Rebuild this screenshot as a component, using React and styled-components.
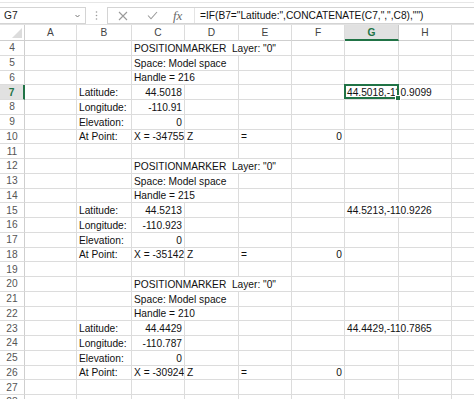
import React from 'react';
import styled, { createGlobalStyle } from 'styled-components';

const GREEN = '#217346';
const GRID = '#dcdcdc';
const HEAD_LINE = '#cfcfcf';
const FONT = '"Liberation Sans", Arial, sans-serif';
const FS = '10.2px';

const GlobalStyle = createGlobalStyle`
  html, body { margin: 0; padding: 0; background: #fff; }
  body { font-family: ${FONT}; }
`;

const Window = styled.div`
  width: 474px;
  height: 399px;
  overflow: hidden;
  background: #fff;
  display: flex;
  flex-direction: column;
`;

const FormulaBar = styled.div`
  margin-top: 2px;
  height: 24px;
  box-sizing: border-box;
  border-top: 1px solid #e6e6e6;
  padding-top: 4px;
  display: flex;
  align-items: flex-start;
`;

const NameBox = styled.div`
  width: 86px;
  height: 17px;
  box-sizing: border-box;
  border: 1px solid #d4d4d4;
  border-left: none;
  display: flex;
  align-items: center;
  justify-content: space-between;
  padding: 0 5px 0 4px;
  font-size: ${FS};
  color: #222;
`;

const Splitter = styled.div`
  width: 21px;
  height: 17px;
  display: flex;
  align-items: center;
  justify-content: center;
`;

const InputBox = styled.div`
  flex: 1;
  height: 17px;
  box-sizing: border-box;
  border: 1px solid #d4d4d4;
  border-right: none;
  display: flex;
  align-items: center;
`;

const Actions = styled.div`
  width: 87px;
  height: 100%;
  box-sizing: border-box;
  display: flex;
  align-items: center;
  padding-left: 10px;
  border-right: 1px solid #e4e4e4;
`;

const ActionSlot = styled.div`
  margin-left: ${(p) => p.$gap || 0}px;
  display: flex;
  align-items: center;
  justify-content: center;
`;

const Fx = styled.span`
  font-family: "Liberation Serif", "DejaVu Serif", serif;
  font-style: italic;
  font-size: 13px;
  color: #6a6a6a;
  line-height: 1;
`;

const FormulaText = styled.div`
  padding-left: 5px;
  font-size: ${FS};
  color: #111;
  white-space: pre;
`;

const Sheet = styled.div`
  display: grid;
  grid-template-columns: 25px 52px 55px 53px 54px 53px 53px 54px 53px 40px;
  grid-template-rows: 16px;
  grid-auto-rows: 14.75px;
  font-size: ${FS};
  border-top: 1px solid #e2e2e2;
`;

const Corner = styled.div`
  position: relative;
  box-sizing: border-box;
  border-right: 1px solid ${HEAD_LINE};
  border-bottom: 1px solid ${HEAD_LINE};
  &::after {
    content: '';
    position: absolute;
    right: 2px;
    bottom: 2px;
    width: 0;
    height: 0;
    border-left: 10px solid transparent;
    border-bottom: 10px solid #dcdcdc;
  }
`;

const ColHeader = styled.div`
  box-sizing: border-box;
  border-right: 1px solid ${(p) => (p.$active ? '#c8c8c8' : GRID)};
  border-bottom: ${(p) => (p.$active ? `2px solid ${GREEN}` : `1px solid ${HEAD_LINE}`)};
  background: ${(p) => (p.$active ? '#e1e1e1' : '#fff')};
  color: ${(p) => (p.$active ? GREEN : '#444')};
  font-weight: ${(p) => (p.$active ? 700 : 400)};
  display: flex;
  align-items: center;
  justify-content: center;
`;

const RowHeader = styled.div`
  box-sizing: border-box;
  border-right: ${(p) => (p.$active ? `2px solid ${GREEN}` : `1px solid ${HEAD_LINE}`)};
  border-bottom: 1px solid ${GRID};
  background: ${(p) => (p.$active ? '#e1e1e1' : '#fff')};
  color: ${(p) => (p.$active ? GREEN : '#555')};
  font-weight: ${(p) => (p.$active ? 700 : 400)};
  display: flex;
  align-items: center;
  justify-content: center;
`;

const Cell = styled.div`
  position: relative;
  grid-column: span ${(p) => p.$span || 1};
  box-sizing: border-box;
  border-right: 1px solid ${GRID};
  border-bottom: 1px solid ${GRID};
  padding: 0 2px 0 2px;
  display: flex;
  align-items: flex-end;
  justify-content: ${(p) => (p.$align === 'right' ? 'flex-end' : 'flex-start')};
  white-space: pre;
  overflow: ${(p) => (p.$clip ? 'hidden' : 'visible')};
  color: #111;
  line-height: 13px;
`;

const Selection = styled.div`
  position: absolute;
  left: -1px;
  top: -1px;
  width: 55px;
  height: calc(100% + 1px);
  box-sizing: border-box;
  border: 2px solid ${GREEN};
  pointer-events: none;
  &::after {
    content: '';
    position: absolute;
    right: -4px;
    bottom: -4px;
    width: 4px;
    height: 4px;
    background: ${GREEN};
    border: 1px solid #fff;
  }
`;

const COLS = ['A', 'B', 'C', 'D', 'E', 'F', 'G', 'H', ''];
const ACTIVE_COL = 6;
const ACTIVE_ROW = 7;

const blocks = [
  { start: 4, handle: 216, lat: '44.5018', lon: '-110.91', x: 'X = -3475529.6', g: '44.5018,-110.9099' },
  { start: 12, handle: 215, lat: '44.5213', lon: '-110.923', x: 'X = -3514287.1', g: '44.5213,-110.9226' },
  { start: 20, handle: 210, lat: '44.4429', lon: '-110.787', x: 'X = -3092451.9', g: '44.4429,-110.7865' },
];

const rowData = {};
blocks.forEach((b) => {
  const s = b.start;
  rowData[s] = { 2: { text: 'POSITIONMARKER  Layer: "0"', span: 3 } };
  rowData[s + 1] = { 2: { text: 'Space: Model space', span: 2 } };
  rowData[s + 2] = { 2: { text: `Handle = ${b.handle}`, span: 2 } };
  rowData[s + 3] = {
    1: { text: 'Latitude:' },
    2: { text: b.lat, align: 'right' },
    6: { text: b.g, span: 2 },
  };
  rowData[s + 4] = { 1: { text: 'Longitude:' }, 2: { text: b.lon, align: 'right' } };
  rowData[s + 5] = { 1: { text: 'Elevation:' }, 2: { text: '0', align: 'right' } };
  rowData[s + 6] = {
    1: { text: 'At Point:' },
    2: { text: b.x, clip: true },
    3: { text: 'Z' },
    4: { text: '=' },
    5: { text: '0', align: 'right' },
  };
});

const ROWS = Array.from({ length: 25 }, (_, i) => i + 4);

function XIcon() {
  return (
    <svg width="10" height="10" viewBox="0 0 10 10">
      <path d="M1 1 L9 9 M9 1 L1 9" stroke="#9a9a9a" strokeWidth="1.1" fill="none" />
    </svg>
  );
}

function CheckIcon() {
  return (
    <svg width="11" height="9" viewBox="0 0 11 9">
      <path d="M1 4.5 L4 7.8 L10 1" stroke="#9a9a9a" strokeWidth="1.1" fill="none" />
    </svg>
  );
}

function Caret() {
  return (
    <svg width="5" height="4" viewBox="0 0 5 4">
      <path d="M0.5 1 L2.5 3 L4.5 1" stroke="#777" strokeWidth="1" fill="none" />
    </svg>
  );
}

function Dots() {
  return (
    <svg width="3" height="9" viewBox="0 0 3 9">
      <circle cx="1.5" cy="1" r="0.8" fill="#9a9a9a" />
      <circle cx="1.5" cy="4.5" r="0.8" fill="#9a9a9a" />
      <circle cx="1.5" cy="8" r="0.8" fill="#9a9a9a" />
    </svg>
  );
}

function SheetRow({ row }) {
  const data = rowData[row] || {};
  const cells = [];
  let c = 0;
  while (c < COLS.length) {
    const d = data[c];
    const span = d && d.span ? d.span : 1;
    const isSel = row === ACTIVE_ROW && c === ACTIVE_COL;
    cells.push(
      <Cell key={c} $span={span} $align={d && d.align} $clip={d && d.clip}>
        {d ? d.text : null}
        {isSel && <Selection />}
      </Cell>
    );
    c += span;
  }
  return (
    <>
      <RowHeader $active={row === ACTIVE_ROW}>{row}</RowHeader>
      {cells}
    </>
  );
}

export default function App() {
  return (
    <Window>
      <GlobalStyle />
      <FormulaBar>
        <NameBox>
          <span>G7</span>
          <Caret />
        </NameBox>
        <Splitter>
          <Dots />
        </Splitter>
        <InputBox>
          <Actions>
            <ActionSlot>
              <XIcon />
            </ActionSlot>
            <ActionSlot $gap={19}>
              <CheckIcon />
            </ActionSlot>
            <ActionSlot $gap={15}>
              <Fx>fx</Fx>
            </ActionSlot>
          </Actions>
          <FormulaText>=IF(B7="Latitude:",CONCATENATE(C7,",",C8),"")</FormulaText>
        </InputBox>
      </FormulaBar>
      <Sheet>
        <Corner />
        {COLS.map((l, i) => (
          <ColHeader key={i} $active={i === ACTIVE_COL}>
            {l}
          </ColHeader>
        ))}
        {ROWS.map((r) => (
          <SheetRow key={r} row={r} />
        ))}
      </Sheet>
    </Window>
  );
}
